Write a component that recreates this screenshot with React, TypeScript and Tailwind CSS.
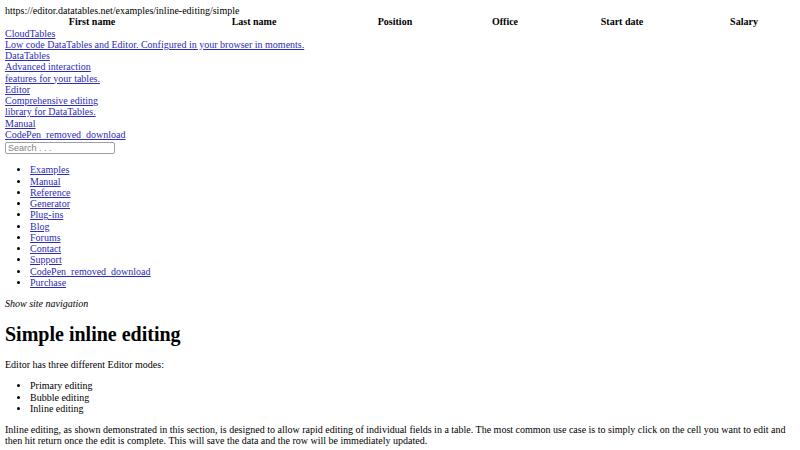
import React from 'react';

const sideLinks = [
  'CloudTables',
  'Low code DataTables and Editor. Configured in your browser in moments.',
  'DataTables',
  'Advanced interaction',
  'features for your tables.',
  'Editor',
  'Comprehensive editing',
  'library for DataTables.',
  'Manual',
  'CodePen_removed_download',
];

const navLinks = [
  'Examples',
  'Manual',
  'Reference',
  'Generator',
  'Plug-ins',
  'Blog',
  'Forums',
  'Contact',
  'Support',
  'CodePen_removed_download',
  'Purchase',
];

const columns: [string, string][] = [
  ['First name', 'w-[174px]'],
  ['Last name', 'w-[150px]'],
  ['Position', 'w-[132px]'],
  ['Office', 'w-[88px]'],
  ['Start date', 'w-[146px]'],
  ['Salary', 'w-[98px]'],
];

export default function App() {
  return (
    <div className="min-h-[450px] bg-white p-[5px] font-['Liberation_Serif',serif] text-[10px] leading-[11.25px] text-black">
      <div>https://editor.datatables.net/examples/inline-editing/simple</div>

      {/* header row of the empty table */}
      <div className="flex font-bold">
        {columns.map(([label, w]) => (
          <div key={label} className={`${w} text-center`}>
            {label}
          </div>
        ))}
      </div>

      {sideLinks.map((l, i) => (
        <div key={i}>
          <a href="#" className="text-[#2c2cb4] underline">
            {l}
          </a>
        </div>
      ))}

      <div className="h-[14.4px] pt-[1.5px]">
        <input
          placeholder="Search . . ."
          className="block h-[12.5px] w-[110px] rounded-[2px] border border-[#a0a0a0] px-[2px] font-['Liberation_Sans',sans-serif] text-[9px] leading-[10px] placeholder:text-[#808080]"
        />
      </div>

      <ul className="my-[10px] list-disc pl-[25px]">
        {navLinks.map((l, i) => (
          <li key={i}>
            <a href="#" className="text-[#2c2cb4] underline">
              {l}
            </a>
          </li>
        ))}
      </ul>

      <div className="italic">Show site navigation</div>

      <h1 className="my-[13.4px] text-[20px] font-bold leading-[23px]">Simple inline editing</h1>

      <p className="mb-[10px]">Editor has three different Editor modes:</p>

      <ul className="my-[10px] list-disc pl-[25px]">
        <li>Primary editing</li>
        <li>Bubble editing</li>
        <li>Inline editing</li>
      </ul>

      <p>
        Inline editing, as shown demonstrated in this section, is designed to allow rapid editing of individual fields
        in a table. The most common use case is to simply click on the cell you want to edit and then hit return once the
        edit is complete. This will save the data and the row will be immediately updated.
      </p>
    </div>
  );
}
